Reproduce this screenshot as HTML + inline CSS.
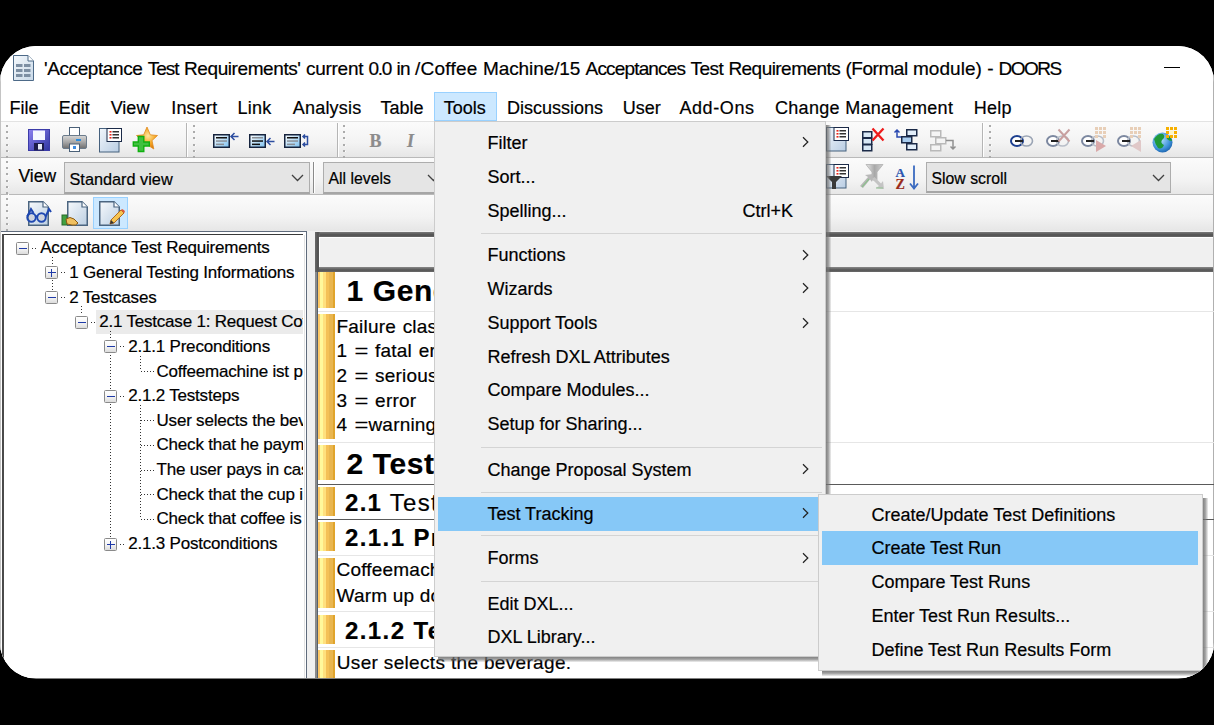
<!DOCTYPE html>
<html><head><meta charset="utf-8"><style>
html,body{margin:0;padding:0;background:#000;}
body{width:1214px;height:725px;overflow:hidden;position:relative;font-family:"Liberation Sans",sans-serif;}
#win{position:absolute;left:0;top:0;width:1214px;height:725px;clip-path:inset(46px 0px 46.5px 0px round 36px);background:#fff;}
.t{position:absolute;white-space:pre;font-family:"Liberation Sans",sans-serif;-webkit-text-stroke:0.2px currentColor;}
.b{position:absolute;}
svg.b{overflow:visible}
</style></head><body><div id="win">
<div class="b" style="left:0px;top:46px;width:1214px;height:76px;background:#fff"></div>
<svg class="b" style="left:13px;top:55px" width="21" height="26" viewBox="0 0 21 26"><defs><linearGradient id="gdoc" x1="0" y1="0" x2="1" y2="1"><stop offset="0" stop-color="#f4f8fc"/><stop offset="1" stop-color="#c9d9e8"/></linearGradient></defs>
<path d="M0.5 0.5 H15 L20.5 6 V25.5 H0.5 Z" fill="url(#gdoc)" stroke="#4d6a88"/>
<path d="M15 0.5 V6 H20.5" fill="#fff" stroke="#4d6a88"/>
<g fill="#7d8fa3"><rect x="3" y="9" width="6.5" height="3"/><rect x="11" y="9" width="6.5" height="3"/><rect x="3" y="14" width="6.5" height="3"/><rect x="11" y="14" width="6.5" height="3"/><rect x="3" y="19" width="6.5" height="3"/><rect x="11" y="19" width="6.5" height="3"/></g></svg>
<div class="t" style="left:44.00px;top:58.62px;font-size:19px;line-height:19px;color:#000;letter-spacing:-0.41px;">'Acceptance</div>
<div class="t" style="left:147.70px;top:58.62px;font-size:19px;line-height:19px;color:#000;letter-spacing:-0.96px;">Test</div>
<div class="t" style="left:184.00px;top:58.62px;font-size:19px;line-height:19px;color:#000;letter-spacing:-0.41px;">Requirements'</div>
<div class="t" style="left:305.90px;top:58.62px;font-size:19px;line-height:19px;color:#000;letter-spacing:-0.26px;">current</div>
<div class="t" style="left:368.50px;top:58.62px;font-size:19px;line-height:19px;color:#000;letter-spacing:-1.24px;">0.0</div>
<div class="t" style="left:396.50px;top:58.62px;font-size:19px;line-height:19px;color:#000;letter-spacing:-0.8px;">in</div>
<div class="t" style="left:415.00px;top:58.62px;font-size:19px;line-height:19px;color:#000;letter-spacing:0.25px;">/Coffee</div>
<div class="t" style="left:483.00px;top:58.62px;font-size:19px;line-height:19px;color:#000;letter-spacing:-0.09px;">Machine/15</div>
<div class="t" style="left:585.60px;top:58.62px;font-size:19px;line-height:19px;color:#000;letter-spacing:-0.84px;">Acceptances</div>
<div class="t" style="left:690.50px;top:58.62px;font-size:19px;line-height:19px;color:#000;letter-spacing:-0.56px;">Test</div>
<div class="t" style="left:728.40px;top:58.62px;font-size:19px;line-height:19px;color:#000;letter-spacing:-0.54px;">Requirements</div>
<div class="t" style="left:845.50px;top:58.62px;font-size:19px;line-height:19px;color:#000;letter-spacing:-0.46px;">(Formal</div>
<div class="t" style="left:913.00px;top:58.62px;font-size:19px;line-height:19px;color:#000;letter-spacing:0.03px;">module)</div>
<div class="t" style="left:987.20px;top:58.62px;font-size:19px;line-height:19px;color:#000;letter-spacing:-0.03px;">-</div>
<div class="t" style="left:998.60px;top:58.62px;font-size:19px;line-height:19px;color:#000;letter-spacing:-1.5px;">DOORS</div>
<div class="b" style="left:1164px;top:67px;width:16px;height:1.3px;background:#000"></div>
<div class="b" style="left:434px;top:92px;width:63px;height:29px;background:#cce8ff;box-sizing:border-box;border:1px solid #99d1ff"></div>
<div class="t" style="left:9.40px;top:98.56px;font-size:18px;line-height:18px;color:#000;">File</div>
<div class="t" style="left:58.80px;top:98.56px;font-size:18px;line-height:18px;color:#000;">Edit</div>
<div class="t" style="left:110.70px;top:98.56px;font-size:18px;line-height:18px;color:#000;">View</div>
<div class="t" style="left:171.20px;top:98.56px;font-size:18px;line-height:18px;color:#000;letter-spacing:0.2px;">Insert</div>
<div class="t" style="left:237.40px;top:98.56px;font-size:18px;line-height:18px;color:#000;letter-spacing:0.3px;">Link</div>
<div class="t" style="left:292.80px;top:98.56px;font-size:18px;line-height:18px;color:#000;letter-spacing:0.2px;">Analysis</div>
<div class="t" style="left:380.50px;top:98.56px;font-size:18px;line-height:18px;color:#000;">Table</div>
<div class="t" style="left:443.70px;top:98.56px;font-size:18px;line-height:18px;color:#000;">Tools</div>
<div class="t" style="left:507.00px;top:98.56px;font-size:18px;line-height:18px;color:#000;">Discussions</div>
<div class="t" style="left:622.70px;top:98.56px;font-size:18px;line-height:18px;color:#000;">User</div>
<div class="t" style="left:679.40px;top:98.56px;font-size:18px;line-height:18px;color:#000;letter-spacing:0.6px;">Add-Ons</div>
<div class="t" style="left:775.00px;top:98.56px;font-size:18px;line-height:18px;color:#000;letter-spacing:0.3px;">Change Management</div>
<div class="t" style="left:973.70px;top:98.56px;font-size:18px;line-height:18px;color:#000;letter-spacing:0.3px;">Help</div>
<div class="b" style="left:0px;top:121px;width:1214px;height:1px;background:#e3e3e3"></div>
<div class="b" style="left:0px;top:122px;width:1214px;height:35px;background:linear-gradient(#fbfbfb,#f3f3f3 60%,#e6e6e6);"></div>
<div class="b" style="left:0px;top:157px;width:1214px;height:1px;background:#b9b9b9"></div>
<div class="b" style="left:0px;top:158px;width:1214px;height:37px;background:linear-gradient(#fbfbfb,#f3f3f3 60%,#e6e6e6);"></div>
<div class="b" style="left:0px;top:194px;width:1214px;height:1px;background:#b9b9b9"></div>
<div class="b" style="left:0px;top:195px;width:1214px;height:36px;background:linear-gradient(#fbfbfb,#f3f3f3 60%,#e6e6e6);"></div>
<div class="b" style="left:0px;top:231px;width:1214px;height:1px;background:#5f6f82"></div>
<div class="b" style="left:186px;top:123px;width:1px;height:34px;background:#b5b5b5"></div>
<div class="b" style="left:187px;top:123px;width:1px;height:34px;background:#fff"></div>
<div class="b" style="left:337px;top:123px;width:1px;height:34px;background:#b5b5b5"></div>
<div class="b" style="left:338px;top:123px;width:1px;height:34px;background:#fff"></div>
<div class="b" style="left:982px;top:123px;width:1px;height:34px;background:#b5b5b5"></div>
<div class="b" style="left:983px;top:123px;width:1px;height:34px;background:#fff"></div>
<div class="b" style="left:6px;top:125px;width:2px;height:2px;background:#ababab"></div>
<div class="b" style="left:7.5px;top:126.5px;width:1.2px;height:1.2px;background:#fff"></div>
<div class="b" style="left:6px;top:131.2px;width:2px;height:2px;background:#ababab"></div>
<div class="b" style="left:7.5px;top:132.7px;width:1.2px;height:1.2px;background:#fff"></div>
<div class="b" style="left:6px;top:137.39999999999998px;width:2px;height:2px;background:#ababab"></div>
<div class="b" style="left:7.5px;top:138.89999999999998px;width:1.2px;height:1.2px;background:#fff"></div>
<div class="b" style="left:6px;top:143.59999999999997px;width:2px;height:2px;background:#ababab"></div>
<div class="b" style="left:7.5px;top:145.09999999999997px;width:1.2px;height:1.2px;background:#fff"></div>
<div class="b" style="left:6px;top:149.79999999999995px;width:2px;height:2px;background:#ababab"></div>
<div class="b" style="left:7.5px;top:151.29999999999995px;width:1.2px;height:1.2px;background:#fff"></div>
<div class="b" style="left:6px;top:155.99999999999994px;width:2px;height:2px;background:#ababab"></div>
<div class="b" style="left:7.5px;top:157.49999999999994px;width:1.2px;height:1.2px;background:#fff"></div>
<div class="b" style="left:193px;top:125px;width:2px;height:2px;background:#ababab"></div>
<div class="b" style="left:194.5px;top:126.5px;width:1.2px;height:1.2px;background:#fff"></div>
<div class="b" style="left:193px;top:131.2px;width:2px;height:2px;background:#ababab"></div>
<div class="b" style="left:194.5px;top:132.7px;width:1.2px;height:1.2px;background:#fff"></div>
<div class="b" style="left:193px;top:137.39999999999998px;width:2px;height:2px;background:#ababab"></div>
<div class="b" style="left:194.5px;top:138.89999999999998px;width:1.2px;height:1.2px;background:#fff"></div>
<div class="b" style="left:193px;top:143.59999999999997px;width:2px;height:2px;background:#ababab"></div>
<div class="b" style="left:194.5px;top:145.09999999999997px;width:1.2px;height:1.2px;background:#fff"></div>
<div class="b" style="left:193px;top:149.79999999999995px;width:2px;height:2px;background:#ababab"></div>
<div class="b" style="left:194.5px;top:151.29999999999995px;width:1.2px;height:1.2px;background:#fff"></div>
<div class="b" style="left:193px;top:155.99999999999994px;width:2px;height:2px;background:#ababab"></div>
<div class="b" style="left:194.5px;top:157.49999999999994px;width:1.2px;height:1.2px;background:#fff"></div>
<div class="b" style="left:343px;top:125px;width:2px;height:2px;background:#ababab"></div>
<div class="b" style="left:344.5px;top:126.5px;width:1.2px;height:1.2px;background:#fff"></div>
<div class="b" style="left:343px;top:131.2px;width:2px;height:2px;background:#ababab"></div>
<div class="b" style="left:344.5px;top:132.7px;width:1.2px;height:1.2px;background:#fff"></div>
<div class="b" style="left:343px;top:137.39999999999998px;width:2px;height:2px;background:#ababab"></div>
<div class="b" style="left:344.5px;top:138.89999999999998px;width:1.2px;height:1.2px;background:#fff"></div>
<div class="b" style="left:343px;top:143.59999999999997px;width:2px;height:2px;background:#ababab"></div>
<div class="b" style="left:344.5px;top:145.09999999999997px;width:1.2px;height:1.2px;background:#fff"></div>
<div class="b" style="left:343px;top:149.79999999999995px;width:2px;height:2px;background:#ababab"></div>
<div class="b" style="left:344.5px;top:151.29999999999995px;width:1.2px;height:1.2px;background:#fff"></div>
<div class="b" style="left:343px;top:155.99999999999994px;width:2px;height:2px;background:#ababab"></div>
<div class="b" style="left:344.5px;top:157.49999999999994px;width:1.2px;height:1.2px;background:#fff"></div>
<div class="b" style="left:989px;top:125px;width:2px;height:2px;background:#ababab"></div>
<div class="b" style="left:990.5px;top:126.5px;width:1.2px;height:1.2px;background:#fff"></div>
<div class="b" style="left:989px;top:131.2px;width:2px;height:2px;background:#ababab"></div>
<div class="b" style="left:990.5px;top:132.7px;width:1.2px;height:1.2px;background:#fff"></div>
<div class="b" style="left:989px;top:137.39999999999998px;width:2px;height:2px;background:#ababab"></div>
<div class="b" style="left:990.5px;top:138.89999999999998px;width:1.2px;height:1.2px;background:#fff"></div>
<div class="b" style="left:989px;top:143.59999999999997px;width:2px;height:2px;background:#ababab"></div>
<div class="b" style="left:990.5px;top:145.09999999999997px;width:1.2px;height:1.2px;background:#fff"></div>
<div class="b" style="left:989px;top:149.79999999999995px;width:2px;height:2px;background:#ababab"></div>
<div class="b" style="left:990.5px;top:151.29999999999995px;width:1.2px;height:1.2px;background:#fff"></div>
<div class="b" style="left:989px;top:155.99999999999994px;width:2px;height:2px;background:#ababab"></div>
<div class="b" style="left:990.5px;top:157.49999999999994px;width:1.2px;height:1.2px;background:#fff"></div>
<div class="b" style="left:6px;top:161px;width:2px;height:2px;background:#ababab"></div>
<div class="b" style="left:7.5px;top:162.5px;width:1.2px;height:1.2px;background:#fff"></div>
<div class="b" style="left:6px;top:167.2px;width:2px;height:2px;background:#ababab"></div>
<div class="b" style="left:7.5px;top:168.7px;width:1.2px;height:1.2px;background:#fff"></div>
<div class="b" style="left:6px;top:173.39999999999998px;width:2px;height:2px;background:#ababab"></div>
<div class="b" style="left:7.5px;top:174.89999999999998px;width:1.2px;height:1.2px;background:#fff"></div>
<div class="b" style="left:6px;top:179.59999999999997px;width:2px;height:2px;background:#ababab"></div>
<div class="b" style="left:7.5px;top:181.09999999999997px;width:1.2px;height:1.2px;background:#fff"></div>
<div class="b" style="left:6px;top:185.79999999999995px;width:2px;height:2px;background:#ababab"></div>
<div class="b" style="left:7.5px;top:187.29999999999995px;width:1.2px;height:1.2px;background:#fff"></div>
<div class="b" style="left:6px;top:191.99999999999994px;width:2px;height:2px;background:#ababab"></div>
<div class="b" style="left:7.5px;top:193.49999999999994px;width:1.2px;height:1.2px;background:#fff"></div>
<div class="b" style="left:6px;top:198px;width:2px;height:2px;background:#ababab"></div>
<div class="b" style="left:7.5px;top:199.5px;width:1.2px;height:1.2px;background:#fff"></div>
<div class="b" style="left:6px;top:204.2px;width:2px;height:2px;background:#ababab"></div>
<div class="b" style="left:7.5px;top:205.7px;width:1.2px;height:1.2px;background:#fff"></div>
<div class="b" style="left:6px;top:210.39999999999998px;width:2px;height:2px;background:#ababab"></div>
<div class="b" style="left:7.5px;top:211.89999999999998px;width:1.2px;height:1.2px;background:#fff"></div>
<div class="b" style="left:6px;top:216.59999999999997px;width:2px;height:2px;background:#ababab"></div>
<div class="b" style="left:7.5px;top:218.09999999999997px;width:1.2px;height:1.2px;background:#fff"></div>
<div class="b" style="left:6px;top:222.79999999999995px;width:2px;height:2px;background:#ababab"></div>
<div class="b" style="left:7.5px;top:224.29999999999995px;width:1.2px;height:1.2px;background:#fff"></div>
<div class="b" style="left:6px;top:228.99999999999994px;width:2px;height:2px;background:#ababab"></div>
<div class="b" style="left:7.5px;top:230.49999999999994px;width:1.2px;height:1.2px;background:#fff"></div>
<svg class="b" style="left:28px;top:129px" width="22" height="22" viewBox="0 0 22 22"><defs><linearGradient id="gsv" x1="0" y1="0" x2="1" y2="1"><stop offset="0" stop-color="#8a7ff0"/><stop offset="1" stop-color="#2f35a0"/></linearGradient></defs>
<rect x="0.5" y="0.5" width="21" height="21" fill="url(#gsv)" stroke="#3b3ba8"/>
<rect x="5" y="1.5" width="12" height="9.5" fill="#f4f6ff"/>
<rect x="6" y="14" width="10" height="7.5" fill="#1c1c4a"/><rect x="10" y="15" width="4" height="5.5" fill="#e8ecf8"/></svg>
<svg class="b" style="left:62px;top:127px" width="25" height="25" viewBox="0 0 25 25"><defs><linearGradient id="gpr" x1="0" y1="0" x2="0" y2="1"><stop offset="0" stop-color="#d8d8d8"/><stop offset="0.5" stop-color="#a8a8a8"/><stop offset="1" stop-color="#6e6e6e"/></linearGradient></defs>
<rect x="7.5" y="0.5" width="10" height="9" fill="#fff" stroke="#4a6078"/>
<rect x="0.5" y="8.5" width="24" height="13" rx="1.5" fill="url(#gpr)" stroke="#6b7b8b"/>
<rect x="14" y="12" width="5" height="2" fill="#2a8de0"/>
<rect x="7.5" y="17" width="10" height="7.5" fill="#fff" stroke="#4a6078"/><rect x="11" y="19" width="3" height="3" fill="#3d8be0"/></svg>
<svg class="b" style="left:99px;top:127.5px" width="23" height="25" viewBox="0 0 23 25"><defs><linearGradient id="gdl" x1="0" y1="0" x2="1" y2="1"><stop offset="0" stop-color="#f2f6fb"/><stop offset="1" stop-color="#b9cde3"/></linearGradient></defs>
<rect x="0.5" y="0.5" width="19.5" height="23.5" fill="url(#gdl)" stroke="#45607d"/>
<rect x="8" y="0.5" width="14.5" height="13" fill="#fff" stroke="#1b2a48"/>
<g fill="#e8261b"><rect x="10.5" y="3" width="2" height="1.6"/><rect x="10.5" y="6" width="2" height="1.6"/><rect x="10.5" y="9" width="2" height="1.6"/></g>
<g fill="#333"><rect x="13.5" y="3" width="6.5" height="1.5"/><rect x="13.5" y="6" width="6.5" height="1.5"/><rect x="13.5" y="9" width="6.5" height="1.5"/></g></svg>
<svg class="b" style="left:133px;top:126px" width="25" height="26" viewBox="0 0 25 26"><defs><radialGradient id="gst" cx="0.55" cy="0.4" r="0.6"><stop offset="0" stop-color="#ffe7a0"/><stop offset="0.6" stop-color="#f5a623"/><stop offset="1" stop-color="#d9780f"/></radialGradient></defs>
<path d="M14 1 L17.3 8.8 L24.5 9.5 L19 14.6 L20.8 23 L14 18.6 L7.2 23 L9 14.6 L3.5 9.5 L10.7 8.8 Z" fill="url(#gst)" stroke="#e08a20" stroke-width="0.8"/>
<path d="M4.5 11 H10 V16.5 H15.5 V20.5 H10 V26 H4.5 V20.5 H-0.5 V16.5 H4.5 Z" transform="translate(0.8,-0.5)" fill="#40c040" stroke="#10b010" stroke-width="1.4"/></svg>
<svg class="b" style="left:213px;top:134px" width="17" height="14" viewBox="0 0 17 14"><defs><linearGradient id="glr" x1="0" y1="0" x2="1" y2="1"><stop offset="0" stop-color="#ffffff"/><stop offset="1" stop-color="#7cc0ef"/></linearGradient></defs>
<rect x="0.75" y="0.75" width="15.5" height="12.5" fill="url(#glr)" stroke="#16243e" stroke-width="1.5"/>
<rect x="3" y="3" width="11" height="1.5" fill="#111"/><rect x="3" y="6.3" width="11" height="1.5" fill="#8a8f96"/><rect x="3" y="9.6" width="8" height="1.5" fill="#8a8f96"/></svg>
<svg class="b" style="left:230px;top:132px" width="9" height="10" viewBox="0 0 9 10"><path d="M8.5 4.5 H1.5 M4.5 1 L1 4.5 L4.5 8" fill="none" stroke="#2d4ea0" stroke-width="1.5"/></svg>
<svg class="b" style="left:249px;top:134px" width="17" height="14" viewBox="0 0 17 14"><defs><linearGradient id="glr" x1="0" y1="0" x2="1" y2="1"><stop offset="0" stop-color="#ffffff"/><stop offset="1" stop-color="#7cc0ef"/></linearGradient></defs>
<rect x="0.75" y="0.75" width="15.5" height="12.5" fill="url(#glr)" stroke="#16243e" stroke-width="1.5"/>
<rect x="3" y="3" width="11" height="1.5" fill="#8a8f96"/><rect x="3" y="6.3" width="11" height="1.5" fill="#111"/><rect x="3" y="9.6" width="8" height="1.5" fill="#111"/></svg>
<svg class="b" style="left:266px;top:137px" width="9" height="10" viewBox="0 0 9 10"><path d="M8.5 4.5 H1.5 M4.5 1 L1 4.5 L4.5 8" fill="none" stroke="#2d4ea0" stroke-width="1.5"/></svg>
<svg class="b" style="left:284px;top:134px" width="17" height="14" viewBox="0 0 17 14"><defs><linearGradient id="glr" x1="0" y1="0" x2="1" y2="1"><stop offset="0" stop-color="#ffffff"/><stop offset="1" stop-color="#7cc0ef"/></linearGradient></defs>
<rect x="0.75" y="0.75" width="15.5" height="12.5" fill="url(#glr)" stroke="#16243e" stroke-width="1.5"/>
<rect x="3" y="3" width="11" height="1.5" fill="#111"/><rect x="3" y="6.3" width="11" height="1.5" fill="#8a8f96"/><rect x="3" y="9.6" width="8" height="1.5" fill="#8a8f96"/></svg>
<svg class="b" style="left:302px;top:134px" width="8" height="13" viewBox="0 0 8 13"><path d="M1 2.5 H5.5 V10.5 H1 M3 0.5 L1 2.5 L3 4.5 M3 8.5 L1 10.5 L3 12.5" fill="none" stroke="#2d4ea0" stroke-width="1.5"/></svg>
<div class="t" style="left:369.50px;top:131.76px;font-size:18px;line-height:18px;color:#8c8c8c;font-weight:bold;font-family:'Liberation Serif',serif;">B</div>
<div class="t" style="left:407.00px;top:131.76px;font-size:18px;line-height:18px;color:#8c8c8c;font-weight:bold;font-family:'Liberation Serif',serif;font-style:italic;">I</div>
<svg class="b" style="left:826px;top:127px" width="23" height="25" viewBox="0 0 23 25"><defs><linearGradient id="gdl" x1="0" y1="0" x2="1" y2="1"><stop offset="0" stop-color="#f2f6fb"/><stop offset="1" stop-color="#b9cde3"/></linearGradient></defs>
<rect x="0.5" y="0.5" width="19.5" height="23.5" fill="url(#gdl)" stroke="#45607d"/>
<rect x="8" y="0.5" width="14.5" height="13" fill="#fff" stroke="#1b2a48"/>
<g fill="#e8261b"><rect x="10.5" y="3" width="2" height="1.6"/><rect x="10.5" y="6" width="2" height="1.6"/><rect x="10.5" y="9" width="2" height="1.6"/></g>
<g fill="#333"><rect x="13.5" y="3" width="6.5" height="1.5"/><rect x="13.5" y="6" width="6.5" height="1.5"/><rect x="13.5" y="9" width="6.5" height="1.5"/></g></svg>
<svg class="b" style="left:862px;top:131px" width="11" height="21" viewBox="0 0 11 21"><rect x="0.75" y="0.75" width="9" height="6" fill="#d8e8f6" stroke="#1b2a48" stroke-width="1.5"/><rect x="0.75" y="7.25" width="9" height="6" fill="#d8e8f6" stroke="#1b2a48" stroke-width="1.5"/><rect x="0.75" y="13.75" width="9" height="6" fill="#d8e8f6" stroke="#1b2a48" stroke-width="1.5"/></svg>
<svg class="b" style="left:871px;top:127px" width="14" height="15" viewBox="0 0 14 15"><path d="M1.5 1.5 L12.5 13.5 M12.5 1.5 L1.5 13.5" stroke="#ee1c1c" stroke-width="2.3"/></svg>
<svg class="b" style="left:894px;top:129px" width="26" height="22" viewBox="0 0 26 22"><path d="M3 1 V8 H10 M0.5 3.5 L3 1 L5.5 3.5" fill="none" stroke="#2a49b0" stroke-width="1.5"/>
<rect x="12.75" y="0.75" width="10" height="6" fill="#e2eefa" stroke="#1b2a48" stroke-width="1.5"/>
<rect x="7.75" y="7.75" width="10" height="6" fill="#a9cdf0" stroke="#1b2a48" stroke-width="1.5"/>
<rect x="12.75" y="14.75" width="10" height="6" fill="#e2eefa" stroke="#1b2a48" stroke-width="1.5"/></svg>
<svg class="b" style="left:930px;top:130px" width="26" height="22" viewBox="0 0 26 22"><g stroke="#b9b9b9" stroke-width="1.5" fill="#f4f4f4"><rect x="0.75" y="0.75" width="10" height="6"/><rect x="5.75" y="7.75" width="10" height="6"/><rect x="0.75" y="14.75" width="10" height="6"/></g>
<path d="M16 10.5 H23 V19 M20.5 16.5 L23 19 L25.5 16.5" fill="none" stroke="#909090" stroke-width="1.5"/></svg>
<svg class="b" style="left:1010px;top:134.5px" width="24" height="12" viewBox="0 0 24 12"><ellipse cx="7" cy="6" rx="6" ry="5" fill="#fff" stroke="#1c3f8f" stroke-width="2"/>
<ellipse cx="16.5" cy="6" rx="6" ry="5" fill="none" stroke="#9aa4b4" stroke-width="1.6"/>
<path d="M5 6 H13" stroke="#222" stroke-width="2"/></svg>
<svg class="b" style="left:1046px;top:134.5px" width="24" height="12" viewBox="0 0 24 12"><ellipse cx="7" cy="6" rx="6" ry="5" fill="#fff" stroke="#7c88a0" stroke-width="2"/>
<ellipse cx="16.5" cy="6" rx="6" ry="5" fill="none" stroke="#b8bec8" stroke-width="1.6"/>
<path d="M5 6 H13" stroke="#222" stroke-width="2"/></svg>
<svg class="b" style="left:1057px;top:128px" width="14" height="15" viewBox="0 0 14 15"><path d="M1.5 1.5 L12.5 13.5 M12.5 1.5 L1.5 13.5" stroke="#c8a0a0" stroke-width="2"/></svg>
<svg class="b" style="left:1081px;top:134.5px" width="24" height="12" viewBox="0 0 24 12"><ellipse cx="7" cy="6" rx="6" ry="5" fill="#fff" stroke="#7c88a0" stroke-width="2"/>
<ellipse cx="16.5" cy="6" rx="6" ry="5" fill="none" stroke="#b8bec8" stroke-width="1.6"/>
<path d="M5 6 H13" stroke="#222" stroke-width="2"/></svg>
<svg class="b" style="left:1095px;top:127px" width="12" height="26" viewBox="0 0 12 26"><g fill="#e8cfb8"><rect x="0" y="0" width="3" height="3"/><rect x="4" y="0" width="3" height="3"/><rect x="8" y="0" width="3" height="3"/><rect x="0" y="4" width="3" height="3"/><rect x="4" y="4" width="3" height="3"/><rect x="8" y="4" width="3" height="3"/><rect x="0" y="8" width="3" height="3"/><rect x="8" y="8" width="3" height="3"/></g><path d="M1 13 L11 19 L1 25 Z" fill="#d9a9a9"/></svg>
<svg class="b" style="left:1117px;top:134.5px" width="24" height="12" viewBox="0 0 24 12"><ellipse cx="7" cy="6" rx="6" ry="5" fill="#fff" stroke="#7c88a0" stroke-width="2"/>
<ellipse cx="16.5" cy="6" rx="6" ry="5" fill="none" stroke="#b8bec8" stroke-width="1.6"/>
<path d="M5 6 H13" stroke="#222" stroke-width="2"/></svg>
<svg class="b" style="left:1130px;top:127px" width="12" height="26" viewBox="0 0 12 26"><g fill="#e8cfb8"><rect x="0" y="0" width="3" height="3"/><rect x="4" y="0" width="3" height="3"/><rect x="8" y="0" width="3" height="3"/><rect x="0" y="4" width="3" height="3"/><rect x="4" y="4" width="3" height="3"/><rect x="8" y="4" width="3" height="3"/><rect x="0" y="8" width="3" height="3"/><rect x="8" y="8" width="3" height="3"/></g><path d="M11 13 L1 19 L11 25 Z" fill="#e0c8c8"/></svg>
<svg class="b" style="left:1152px;top:127px" width="27" height="26" viewBox="0 0 27 26"><defs><radialGradient id="ggl" cx="0.4" cy="0.35" r="0.7"><stop offset="0" stop-color="#b8e4ff"/><stop offset="0.7" stop-color="#3a8fd8"/><stop offset="1" stop-color="#1b5fa8"/></radialGradient></defs>
<circle cx="10.5" cy="15.5" r="10" fill="url(#ggl)"/>
<path d="M2 12 Q6 6 11 7 Q14 10 10 13 Q8 16 12 18 Q10 23 6 21 Q3 17 2 12 Z M14 8 Q19 9 20 14 Q17 14 15 12 Z" fill="#1f9a3a"/>
<g fill="#f7b000"><rect x="14" y="0" width="3" height="3"/><rect x="18" y="0" width="3" height="3"/><rect x="22" y="0" width="3" height="3"/><rect x="14" y="4" width="3" height="3"/><rect x="18" y="4" width="3" height="3"/><rect x="22" y="4" width="3" height="3"/><rect x="14" y="8" width="3" height="3"/><rect x="18" y="8" width="3" height="3"/><rect x="22" y="8" width="3" height="3"/></g>
<rect x="17.5" y="3.5" width="4" height="4" fill="#fff6c0"/></svg>
<div class="t" style="left:18.50px;top:167.69px;font-size:17.5px;line-height:17.5px;color:#000;">View</div>
<div class="b" style="left:64px;top:161.5px;width:246px;height:32.5px;background:#e5e5e5;box-sizing:border-box;border:1px solid #adadad;border-bottom:2px solid #a6a6a6"></div>
<div class="t" style="left:69.50px;top:170.50px;font-size:16.3px;line-height:16.3px;color:#000;">Standard view</div>
<svg class="b" style="left:291px;top:174px" width="13" height="8" viewBox="0 0 13 8"><path d="M1 1 L6.5 6.5 L12 1" fill="none" stroke="#404040" stroke-width="1.3"/></svg>
<div class="b" style="left:313px;top:162px;width:1px;height:31px;background:#8a8a8a"></div>
<div class="b" style="left:314px;top:162px;width:1px;height:31px;background:#fff"></div>
<div class="b" style="left:323px;top:161.5px;width:123px;height:32.5px;background:#e5e5e5;box-sizing:border-box;border:1px solid #adadad;border-bottom:2px solid #a6a6a6"></div>
<div class="t" style="left:328.50px;top:170.93px;font-size:15.8px;line-height:15.8px;color:#000;">All levels</div>
<svg class="b" style="left:427px;top:174px" width="13" height="8" viewBox="0 0 13 8"><path d="M1 1 L6.5 6.5 L12 1" fill="none" stroke="#404040" stroke-width="1.3"/></svg>
<svg class="b" style="left:826px;top:164px" width="23" height="25" viewBox="0 0 23 25"><defs><linearGradient id="gdl" x1="0" y1="0" x2="1" y2="1"><stop offset="0" stop-color="#f2f6fb"/><stop offset="1" stop-color="#b9cde3"/></linearGradient></defs>
<rect x="0.5" y="0.5" width="19.5" height="23.5" fill="url(#gdl)" stroke="#45607d"/>
<rect x="8" y="0.5" width="14.5" height="13" fill="#fff" stroke="#1b2a48"/>
<g fill="#e8261b"><rect x="10.5" y="3" width="2" height="1.6"/><rect x="10.5" y="6" width="2" height="1.6"/><rect x="10.5" y="9" width="2" height="1.6"/></g>
<g fill="#333"><rect x="13.5" y="3" width="6.5" height="1.5"/><rect x="13.5" y="6" width="6.5" height="1.5"/><rect x="13.5" y="9" width="6.5" height="1.5"/></g></svg>
<svg class="b" style="left:826px;top:175px" width="20" height="15" viewBox="0 0 20 15"><path d="M0 1 H16 L10 7 V14 H6 V7 Z" fill="#3a3a3a"/></svg>
<svg class="b" style="left:859px;top:164px" width="26" height="26" viewBox="0 0 26 26"><defs><linearGradient id="gfn" x1="0" y1="0" x2="1" y2="0"><stop offset="0" stop-color="#e8e8e8"/><stop offset="0.5" stop-color="#a8a8a8"/><stop offset="1" stop-color="#d0d0d0"/></linearGradient></defs>
<path d="M7 0.5 H24 L18 8 V16 H13 V8 Z" fill="url(#gfn)" stroke="#b0b0b0" stroke-width="0.8"/>
<path d="M1 22 L9 13 L6 11 L14 10 L13 18 L11 15.5 L4 24 Z" fill="#b8b8b8"/>
<path d="M13 15 L20 22 L17 24 L25 25 L24 17 L22 19.5 L15.5 13 Z" fill="#c4c4c4"/>
<path d="M3 23 L10 15" stroke="#8fbf8f" stroke-width="1.2"/><path d="M17 24 L24 24" stroke="#8fbf8f" stroke-width="1.2"/></svg>
<div class="t" style="left:895.50px;top:166.00px;font-size:13px;line-height:13px;color:#2a55b0;font-weight:bold;font-family:'Liberation Serif',serif;">A</div>
<div class="t" style="left:895.50px;top:177.65px;font-size:14px;line-height:14px;color:#9a2a1a;font-weight:bold;font-family:'Liberation Serif',serif;">Z</div>
<svg class="b" style="left:909px;top:165px" width="10" height="25" viewBox="0 0 10 25"><path d="M5 0.5 V23 M1 18.5 L5 23.5 L9 18.5" fill="none" stroke="#3a6ac0" stroke-width="1.8"/></svg>
<div class="b" style="left:926px;top:161.5px;width:245px;height:31.5px;background:#e5e5e5;box-sizing:border-box;border:1px solid #adadad;border-bottom:2px solid #a6a6a6"></div>
<div class="t" style="left:931.50px;top:170.93px;font-size:15.8px;line-height:15.8px;color:#000;">Slow scroll</div>
<svg class="b" style="left:1152px;top:174px" width="13" height="8" viewBox="0 0 13 8"><path d="M1 1 L6.5 6.5 L12 1" fill="none" stroke="#404040" stroke-width="1.3"/></svg>
<svg class="b" style="left:28px;top:201px" width="21" height="25" viewBox="0 0 21 25"><defs><linearGradient id="gd3" x1="0" y1="0" x2="1" y2="1"><stop offset="0" stop-color="#f6f9fc"/><stop offset="1" stop-color="#bccfe2"/></linearGradient></defs>
<path d="M0.75 0.75 H15 L20.25 6 V24.25 H0.75 Z" fill="url(#gd3)" stroke="#4b6580" stroke-width="1.5"/><path d="M15 0.75 V6 H20.25" fill="#fff" stroke="#4b6580" stroke-width="1.2"/></svg>
<svg class="b" style="left:26px;top:206px" width="26" height="17" viewBox="0 0 26 17"><g fill="none" stroke="#1f48b0" stroke-width="2"><circle cx="5.5" cy="11.5" r="4.2"/><circle cx="15.5" cy="11.5" r="4.2"/><path d="M9.5 11 Q10.5 9.5 11.5 11 M1.3 10.5 L5 3 L7.5 7 M19.7 10.5 L23 3 L25 6"/></g>
<g fill="#d0d4dc"><circle cx="5.5" cy="11.5" r="2.8"/><circle cx="15.5" cy="11.5" r="2.8"/></g></svg>
<svg class="b" style="left:67px;top:201px" width="21" height="25" viewBox="0 0 21 25"><defs><linearGradient id="gd3" x1="0" y1="0" x2="1" y2="1"><stop offset="0" stop-color="#f6f9fc"/><stop offset="1" stop-color="#bccfe2"/></linearGradient></defs>
<path d="M0.75 0.75 H15 L20.25 6 V24.25 H0.75 Z" fill="url(#gd3)" stroke="#4b6580" stroke-width="1.5"/><path d="M15 0.75 V6 H20.25" fill="#fff" stroke="#4b6580" stroke-width="1.2"/></svg>
<svg class="b" style="left:61px;top:214px" width="19" height="13" viewBox="0 0 19 13"><rect x="1" y="1" width="5" height="10" fill="#40a040" stroke="#2a6a2a"/>
<path d="M5 5 Q9 2 13 5 L17 9 Q15 12 11 11 L6 10 Z" fill="#f0c060" stroke="#8a5a10" stroke-width="1"/></svg>
<div class="b" style="left:93px;top:197px;width:35px;height:32px;background:#cce8ff;box-sizing:border-box;border:1px solid #99d1ff"></div>
<svg class="b" style="left:99px;top:201px" width="21" height="25" viewBox="0 0 21 25"><defs><linearGradient id="gd3" x1="0" y1="0" x2="1" y2="1"><stop offset="0" stop-color="#f6f9fc"/><stop offset="1" stop-color="#bccfe2"/></linearGradient></defs>
<path d="M0.75 0.75 H15 L20.25 6 V24.25 H0.75 Z" fill="url(#gd3)" stroke="#4b6580" stroke-width="1.5"/><path d="M15 0.75 V6 H20.25" fill="#fff" stroke="#4b6580" stroke-width="1.2"/></svg>
<svg class="b" style="left:108px;top:208px" width="18" height="18" viewBox="0 0 18 18"><path d="M2 16 L3 12 L13 2 L16 5 L6 15 Z" fill="#f5c451" stroke="#b06a20" stroke-width="1"/><path d="M13 2 L16 5 L17 4 Q17 2 14 1 Z" fill="#e05a3a"/><path d="M2 16 L3 12 L6 15 Z" fill="#333"/></svg>
<div class="b" style="left:0px;top:231px;width:1214px;height:447px;background:#f0f0f0"></div>
<div class="b" style="left:1px;top:231px;width:306px;height:447px;background:#fff;box-sizing:border-box;border-top:1px solid #5f6b7c;border-right:1px solid #5f6b7c"></div>
<div class="b" style="left:2px;top:234px;width:301px;height:1px;background:#3a3a3a"></div>
<div class="b" style="left:2px;top:234px;width:2px;height:444px;background:#4a4a4a"></div>
<div class="b" style="left:0px;top:46px;width:1px;height:632px;background:#c4c4c4"></div>
<div class="b" style="left:315px;top:232px;width:899px;height:446px;background:#fff"></div>
<div class="b" style="left:315px;top:232px;width:899px;height:5px;background:linear-gradient(#7a7a7a,#505050 60%,#6a6a6a)"></div>
<div class="b" style="left:315px;top:232px;width:4.5px;height:40px;background:linear-gradient(90deg,#6a6a6a,#505050 60%,#6a6a6a)"></div>
<div class="b" style="left:319px;top:237px;width:895px;height:31px;background:#f0f0f0;box-sizing:border-box;border-top:1px solid #fff;border-left:1px solid #fff"></div>
<div class="b" style="left:319px;top:267px;width:895px;height:4.5px;background:linear-gradient(#8a8a8a,#555 60%,#6a6a6a)"></div>
<div class="b" style="left:315px;top:272px;width:2px;height:406px;background:#8a8a8a"></div>
<div class="b" style="left:317px;top:272px;width:1px;height:406px;background:#56606e"></div>
<div class="b" style="left:1213px;top:46px;width:1px;height:632px;background:#b0b0b0"></div>
<div class="b" style="left:0;top:0;width:303px;height:678px;overflow:hidden"><div class="b" style="left:96px;top:309.5px;width:208px;height:24px;background:#ebebeb"></div>
<div class="b" style="left:16px;top:242px;width:13px;height:13px;box-sizing:border-box;border:1.3px solid #8a8a8a;border-radius:1.5px;background:linear-gradient(#ffffff,#f4f4f4 50%,#dcdcdc)"></div>
<div class="b" style="left:19px;top:248px;width:7.5px;height:1.4px;background:#1f3aa8"></div>
<div class="b" style="left:32px;top:248px;width:4px;height:1px;background:repeating-linear-gradient(90deg,#333 0 1px,transparent 1px 3px)"></div>
<div class="t" style="left:40.20px;top:239.21px;font-size:17px;line-height:17px;color:#000;letter-spacing:-0.2px;">Acceptance Test Requirements</div>
<div class="b" style="left:45px;top:266px;width:13px;height:13px;box-sizing:border-box;border:1.3px solid #8a8a8a;border-radius:1.5px;background:linear-gradient(#ffffff,#f4f4f4 50%,#dcdcdc)"></div>
<div class="b" style="left:48px;top:272px;width:7.5px;height:1.4px;background:#1f3aa8"></div>
<div class="b" style="left:51px;top:269px;width:1.4px;height:7.5px;background:#1f3aa8"></div>
<div class="b" style="left:61px;top:272px;width:4px;height:1px;background:repeating-linear-gradient(90deg,#333 0 1px,transparent 1px 3px)"></div>
<div class="t" style="left:69.20px;top:263.87px;font-size:17px;line-height:17px;color:#000;letter-spacing:-0.2px;">1 General Testing Informations</div>
<div class="b" style="left:45px;top:291px;width:13px;height:13px;box-sizing:border-box;border:1.3px solid #8a8a8a;border-radius:1.5px;background:linear-gradient(#ffffff,#f4f4f4 50%,#dcdcdc)"></div>
<div class="b" style="left:48px;top:297px;width:7.5px;height:1.4px;background:#1f3aa8"></div>
<div class="b" style="left:61px;top:297px;width:4px;height:1px;background:repeating-linear-gradient(90deg,#333 0 1px,transparent 1px 3px)"></div>
<div class="t" style="left:69.20px;top:288.53px;font-size:17px;line-height:17px;color:#000;letter-spacing:-0.2px;">2 Testcases</div>
<div class="b" style="left:75px;top:316px;width:13px;height:13px;box-sizing:border-box;border:1.3px solid #8a8a8a;border-radius:1.5px;background:linear-gradient(#ffffff,#f4f4f4 50%,#dcdcdc)"></div>
<div class="b" style="left:78px;top:322px;width:7.5px;height:1.4px;background:#1f3aa8"></div>
<div class="b" style="left:91px;top:322px;width:4px;height:1px;background:repeating-linear-gradient(90deg,#333 0 1px,transparent 1px 3px)"></div>
<div class="t" style="left:99.20px;top:313.19px;font-size:17px;line-height:17px;color:#000;letter-spacing:-0.2px;">2.1 Testcase 1: Request Coffee</div>
<div class="b" style="left:104px;top:340px;width:13px;height:13px;box-sizing:border-box;border:1.3px solid #8a8a8a;border-radius:1.5px;background:linear-gradient(#ffffff,#f4f4f4 50%,#dcdcdc)"></div>
<div class="b" style="left:107px;top:346px;width:7.5px;height:1.4px;background:#1f3aa8"></div>
<div class="b" style="left:120px;top:346px;width:4px;height:1px;background:repeating-linear-gradient(90deg,#333 0 1px,transparent 1px 3px)"></div>
<div class="t" style="left:128.20px;top:337.85px;font-size:17px;line-height:17px;color:#000;letter-spacing:-0.2px;">2.1.1 Preconditions</div>
<div class="b" style="left:141px;top:371px;width:13px;height:1px;background:repeating-linear-gradient(90deg,#333 0 1px,transparent 1px 3px)"></div>
<div class="t" style="left:156.50px;top:362.51px;font-size:17px;line-height:17px;color:#000;letter-spacing:-0.2px;">Coffeemachine ist plugged in</div>
<div class="b" style="left:104px;top:390px;width:13px;height:13px;box-sizing:border-box;border:1.3px solid #8a8a8a;border-radius:1.5px;background:linear-gradient(#ffffff,#f4f4f4 50%,#dcdcdc)"></div>
<div class="b" style="left:107px;top:396px;width:7.5px;height:1.4px;background:#1f3aa8"></div>
<div class="b" style="left:120px;top:396px;width:4px;height:1px;background:repeating-linear-gradient(90deg,#333 0 1px,transparent 1px 3px)"></div>
<div class="t" style="left:128.20px;top:387.17px;font-size:17px;line-height:17px;color:#000;letter-spacing:-0.2px;">2.1.2 Teststeps</div>
<div class="b" style="left:141px;top:420px;width:13px;height:1px;background:repeating-linear-gradient(90deg,#333 0 1px,transparent 1px 3px)"></div>
<div class="t" style="left:156.50px;top:411.83px;font-size:17px;line-height:17px;color:#000;letter-spacing:-0.2px;">User selects the beverage</div>
<div class="b" style="left:141px;top:445px;width:13px;height:1px;background:repeating-linear-gradient(90deg,#333 0 1px,transparent 1px 3px)"></div>
<div class="t" style="left:156.50px;top:436.49px;font-size:17px;line-height:17px;color:#000;letter-spacing:-0.2px;">Check that he payment</div>
<div class="b" style="left:141px;top:470px;width:13px;height:1px;background:repeating-linear-gradient(90deg,#333 0 1px,transparent 1px 3px)"></div>
<div class="t" style="left:156.50px;top:461.15px;font-size:17px;line-height:17px;color:#000;letter-spacing:-0.2px;">The user pays in cash</div>
<div class="b" style="left:141px;top:494px;width:13px;height:1px;background:repeating-linear-gradient(90deg,#333 0 1px,transparent 1px 3px)"></div>
<div class="t" style="left:156.50px;top:485.81px;font-size:17px;line-height:17px;color:#000;letter-spacing:-0.2px;">Check that the cup is</div>
<div class="b" style="left:141px;top:519px;width:13px;height:1px;background:repeating-linear-gradient(90deg,#333 0 1px,transparent 1px 3px)"></div>
<div class="t" style="left:156.50px;top:510.47px;font-size:17px;line-height:17px;color:#000;letter-spacing:-0.2px;">Check that coffee is</div>
<div class="b" style="left:104px;top:538px;width:13px;height:13px;box-sizing:border-box;border:1.3px solid #8a8a8a;border-radius:1.5px;background:linear-gradient(#ffffff,#f4f4f4 50%,#dcdcdc)"></div>
<div class="b" style="left:107px;top:544px;width:7.5px;height:1.4px;background:#1f3aa8"></div>
<div class="b" style="left:110px;top:541px;width:1.4px;height:7.5px;background:#1f3aa8"></div>
<div class="b" style="left:120px;top:544px;width:4px;height:1px;background:repeating-linear-gradient(90deg,#333 0 1px,transparent 1px 3px)"></div>
<div class="t" style="left:128.20px;top:535.13px;font-size:17px;line-height:17px;color:#000;letter-spacing:-0.2px;">2.1.3 Postconditions</div>
</div><div class="b" style="left:52px;top:257px;width:1px;height:9px;background:repeating-linear-gradient(#333 0 1px,transparent 1px 3px)"></div>
<div class="b" style="left:52px;top:280px;width:1px;height:11px;background:repeating-linear-gradient(#333 0 1px,transparent 1px 3px)"></div>
<div class="b" style="left:81px;top:306px;width:1px;height:9px;background:repeating-linear-gradient(#333 0 1px,transparent 1px 3px)"></div>
<div class="b" style="left:110px;top:331px;width:1px;height:9px;background:repeating-linear-gradient(#333 0 1px,transparent 1px 3px)"></div>
<div class="b" style="left:110px;top:355px;width:1px;height:34px;background:repeating-linear-gradient(#333 0 1px,transparent 1px 3px)"></div>
<div class="b" style="left:110px;top:404px;width:1px;height:133px;background:repeating-linear-gradient(#333 0 1px,transparent 1px 3px)"></div>
<div class="b" style="left:140px;top:356px;width:1px;height:15px;background:repeating-linear-gradient(#333 0 1px,transparent 1px 3px)"></div>
<div class="b" style="left:140px;top:405px;width:1px;height:114px;background:repeating-linear-gradient(#333 0 1px,transparent 1px 3px)"></div>
<div class="b" style="left:303px;top:235px;width:3px;height:443px;background:#fff"></div>
<div class="b" style="left:304px;top:235px;width:1px;height:443px;background:#e2e2e2"></div>
<div class="b" style="left:318px;top:272px;width:17px;height:35.69999999999999px;background:linear-gradient(90deg,#fcc866 0 2.5px,#fff89c 2.5px 5.5px,#ffe07e 5.5px 8px,#f4c057 8px 11.5px,#e9b650 11.5px 15.5px,#e0a42c 15.5px 17px)"></div>
<div class="b" style="left:318px;top:314px;width:17px;height:124.5px;background:linear-gradient(90deg,#fcc866 0 2.5px,#fff89c 2.5px 5.5px,#ffe07e 5.5px 8px,#f4c057 8px 11.5px,#e9b650 11.5px 15.5px,#e0a42c 15.5px 17px)"></div>
<div class="b" style="left:318px;top:445px;width:17px;height:35px;background:linear-gradient(90deg,#fcc866 0 2.5px,#fff89c 2.5px 5.5px,#ffe07e 5.5px 8px,#f4c057 8px 11.5px,#e9b650 11.5px 15.5px,#e0a42c 15.5px 17px)"></div>
<div class="b" style="left:318px;top:487px;width:17px;height:28.5px;background:linear-gradient(90deg,#fcc866 0 2.5px,#fff89c 2.5px 5.5px,#ffe07e 5.5px 8px,#f4c057 8px 11.5px,#e9b650 11.5px 15.5px,#e0a42c 15.5px 17px)"></div>
<div class="b" style="left:318px;top:522px;width:17px;height:29px;background:linear-gradient(90deg,#fcc866 0 2.5px,#fff89c 2.5px 5.5px,#ffe07e 5.5px 8px,#f4c057 8px 11.5px,#e9b650 11.5px 15.5px,#e0a42c 15.5px 17px)"></div>
<div class="b" style="left:318px;top:557.5px;width:17px;height:50.0px;background:linear-gradient(90deg,#fcc866 0 2.5px,#fff89c 2.5px 5.5px,#ffe07e 5.5px 8px,#f4c057 8px 11.5px,#e9b650 11.5px 15.5px,#e0a42c 15.5px 17px)"></div>
<div class="b" style="left:318px;top:614.5px;width:17px;height:29.0px;background:linear-gradient(90deg,#fcc866 0 2.5px,#fff89c 2.5px 5.5px,#ffe07e 5.5px 8px,#f4c057 8px 11.5px,#e9b650 11.5px 15.5px,#e0a42c 15.5px 17px)"></div>
<div class="b" style="left:318px;top:650px;width:17px;height:28px;background:linear-gradient(90deg,#fcc866 0 2.5px,#fff89c 2.5px 5.5px,#ffe07e 5.5px 8px,#f4c057 8px 11.5px,#e9b650 11.5px 15.5px,#e0a42c 15.5px 17px)"></div>
<div class="b" style="left:318px;top:311px;width:896px;height:1px;background:#e6e6e6"></div>
<div class="b" style="left:318px;top:442px;width:896px;height:1px;background:#e6e6e6"></div>
<div class="b" style="left:318px;top:555px;width:896px;height:1px;background:#e6e6e6"></div>
<div class="b" style="left:318px;top:611px;width:896px;height:1px;background:#e6e6e6"></div>
<div class="b" style="left:318px;top:647px;width:896px;height:1px;background:#e6e6e6"></div>
<div class="b" style="left:318px;top:483.5px;width:896px;height:1.6px;background:#5a5a5a"></div>
<div class="b" style="left:318px;top:518.5px;width:896px;height:1.6px;background:#5a5a5a"></div>
<div class="t" style="left:346.50px;top:275.91px;font-size:30px;line-height:30px;color:#000;font-weight:bold;letter-spacing:0.6px;">1 General Testing Informations</div>
<div class="t" style="left:336.50px;top:317.32px;font-size:19px;line-height:19px;color:#000;letter-spacing:0.2px;word-spacing:1.2px;">Failure classes:</div>
<div class="t" style="left:336.50px;top:341.32px;font-size:19px;line-height:19px;color:#000;letter-spacing:0.2px;word-spacing:1.2px;">1 <span style="display:inline-block;transform:scaleX(1.25);margin:0 1.6px">=</span> fatal error</div>
<div class="t" style="left:336.50px;top:366.12px;font-size:19px;line-height:19px;color:#000;letter-spacing:0.2px;word-spacing:1.2px;">2 <span style="display:inline-block;transform:scaleX(1.25);margin:0 1.6px">=</span> serious error</div>
<div class="t" style="left:336.50px;top:390.92px;font-size:19px;line-height:19px;color:#000;letter-spacing:0.2px;word-spacing:1.2px;">3 <span style="display:inline-block;transform:scaleX(1.25);margin:0 1.6px">=</span> error</div>
<div class="t" style="left:336.50px;top:414.92px;font-size:19px;line-height:19px;color:#000;letter-spacing:0.2px;word-spacing:1.2px;">4 <span style="display:inline-block;transform:scaleX(1.25);margin:0 1.6px">=</span>warning</div>
<div class="t" style="left:346.50px;top:449.11px;font-size:30px;line-height:30px;color:#000;font-weight:bold;letter-spacing:0.6px;">2 Testcases</div>
<div class="t" style="left:345.00px;top:490.68px;font-size:24px;line-height:24px;color:#000;letter-spacing:1.3px;"><b>2.1</b> Testcase 1: Request Coffee</div>
<div class="t" style="left:345.00px;top:525.88px;font-size:24px;line-height:24px;color:#000;font-weight:bold;letter-spacing:1.4px;">2.1.1 Preconditions</div>
<div class="t" style="left:336.50px;top:559.92px;font-size:19px;line-height:19px;color:#000;letter-spacing:0.2px;">Coffeemachine ist plugged in</div>
<div class="t" style="left:336.50px;top:585.62px;font-size:19px;line-height:19px;color:#000;letter-spacing:0.2px;">Warm up done</div>
<div class="t" style="left:345.00px;top:618.68px;font-size:24px;line-height:24px;color:#000;font-weight:bold;letter-spacing:1.4px;">2.1.2 Teststeps</div>
<div class="t" style="left:336.80px;top:653.12px;font-size:19px;line-height:19px;color:#000;letter-spacing:0.33px;">User selects the beverage.</div>
<div class="b" style="left:826px;top:125px;width:5px;height:536px;background:linear-gradient(90deg,rgba(100,100,100,.8),rgba(120,120,120,.7) 45%,rgba(0,0,0,.06))"></div>
<div class="b" style="left:438px;top:657px;width:388px;height:5px;background:linear-gradient(rgba(100,100,100,.8),rgba(120,120,120,.7) 45%,rgba(0,0,0,.06))"></div>
<div class="b" style="left:434px;top:121px;width:392px;height:536px;background:#f0f0f0;box-sizing:border-box;border:1px solid #cccccc"></div>
<div class="b" style="left:438px;top:497px;width:384px;height:34px;background:#86c8f7"></div>
<div class="t" style="left:487.40px;top:133.76px;font-size:18px;line-height:18px;color:#000;">Filter</div>
<svg class="b" style="left:801.5px;top:137px" width="7" height="10" viewBox="0 0 7 10"><path d="M1 0.3 L5.8 5 L1 9.7" fill="none" stroke="#222" stroke-width="1.25"/></svg>
<div class="t" style="left:487.40px;top:168.26px;font-size:18px;line-height:18px;color:#000;">Sort...</div>
<div class="t" style="left:487.40px;top:201.76px;font-size:18px;line-height:18px;color:#000;">Spelling...</div>
<div class="t" style="left:742.50px;top:201.76px;font-size:18px;line-height:18px;color:#000;">Ctrl+K</div>
<div class="b" style="left:481px;top:232.7px;width:341px;height:1.6px;background:#d4d4d4"></div>
<div class="t" style="left:487.40px;top:246.36px;font-size:18px;line-height:18px;color:#000;">Functions</div>
<svg class="b" style="left:801.5px;top:249.60000000000002px" width="7" height="10" viewBox="0 0 7 10"><path d="M1 0.3 L5.8 5 L1 9.7" fill="none" stroke="#222" stroke-width="1.25"/></svg>
<div class="t" style="left:487.40px;top:280.06px;font-size:18px;line-height:18px;color:#000;">Wizards</div>
<svg class="b" style="left:801.5px;top:283.3px" width="7" height="10" viewBox="0 0 7 10"><path d="M1 0.3 L5.8 5 L1 9.7" fill="none" stroke="#222" stroke-width="1.25"/></svg>
<div class="t" style="left:487.40px;top:314.26px;font-size:18px;line-height:18px;color:#000;">Support Tools</div>
<svg class="b" style="left:801.5px;top:317.5px" width="7" height="10" viewBox="0 0 7 10"><path d="M1 0.3 L5.8 5 L1 9.7" fill="none" stroke="#222" stroke-width="1.25"/></svg>
<div class="t" style="left:487.40px;top:347.56px;font-size:18px;line-height:18px;color:#000;">Refresh DXL Attributes</div>
<div class="t" style="left:487.40px;top:381.36px;font-size:18px;line-height:18px;color:#000;">Compare Modules...</div>
<div class="t" style="left:487.40px;top:415.16px;font-size:18px;line-height:18px;color:#000;">Setup for Sharing...</div>
<div class="b" style="left:481px;top:446.7px;width:341px;height:1.6px;background:#d4d4d4"></div>
<div class="t" style="left:487.40px;top:460.56px;font-size:18px;line-height:18px;color:#000;">Change Proposal System</div>
<svg class="b" style="left:801.5px;top:463.8px" width="7" height="10" viewBox="0 0 7 10"><path d="M1 0.3 L5.8 5 L1 9.7" fill="none" stroke="#222" stroke-width="1.25"/></svg>
<div class="b" style="left:481px;top:491.7px;width:341px;height:1.6px;background:#d4d4d4"></div>
<div class="t" style="left:487.40px;top:504.56px;font-size:18px;line-height:18px;color:#000;">Test Tracking</div>
<svg class="b" style="left:801.5px;top:507.79999999999995px" width="7" height="10" viewBox="0 0 7 10"><path d="M1 0.3 L5.8 5 L1 9.7" fill="none" stroke="#222" stroke-width="1.25"/></svg>
<div class="b" style="left:481px;top:534.7px;width:341px;height:1.6px;background:#d4d4d4"></div>
<div class="t" style="left:487.40px;top:549.46px;font-size:18px;line-height:18px;color:#000;">Forms</div>
<svg class="b" style="left:801.5px;top:552.7px" width="7" height="10" viewBox="0 0 7 10"><path d="M1 0.3 L5.8 5 L1 9.7" fill="none" stroke="#222" stroke-width="1.25"/></svg>
<div class="b" style="left:481px;top:580.7px;width:341px;height:1.6px;background:#d4d4d4"></div>
<div class="t" style="left:487.40px;top:594.76px;font-size:18px;line-height:18px;color:#000;">Edit DXL...</div>
<div class="t" style="left:487.40px;top:627.76px;font-size:18px;line-height:18px;color:#000;">DXL Library...</div>
<div class="b" style="left:1202.5px;top:497.5px;width:5px;height:177.0px;background:linear-gradient(90deg,rgba(100,100,100,.8),rgba(120,120,120,.7) 45%,rgba(0,0,0,.06))"></div>
<div class="b" style="left:822px;top:670.5px;width:380.5px;height:5px;background:linear-gradient(rgba(100,100,100,.8),rgba(120,120,120,.7) 45%,rgba(0,0,0,.06))"></div>
<div class="b" style="left:818px;top:493.5px;width:384.5px;height:177.0px;background:#f0f0f0;box-sizing:border-box;border:1px solid #cccccc"></div>
<div class="b" style="left:822px;top:531px;width:376px;height:34px;background:#86c8f7"></div>
<div class="t" style="left:871.40px;top:505.56px;font-size:18px;line-height:18px;color:#000;">Create/Update Test Definitions</div>
<div class="t" style="left:871.40px;top:538.66px;font-size:18px;line-height:18px;color:#000;">Create Test Run</div>
<div class="t" style="left:871.40px;top:572.76px;font-size:18px;line-height:18px;color:#000;">Compare Test Runs</div>
<div class="t" style="left:871.40px;top:606.86px;font-size:18px;line-height:18px;color:#000;">Enter Test Run Results...</div>
<div class="t" style="left:871.40px;top:640.96px;font-size:18px;line-height:18px;color:#000;">Define Test Run Results Form</div>
</div></body></html>
